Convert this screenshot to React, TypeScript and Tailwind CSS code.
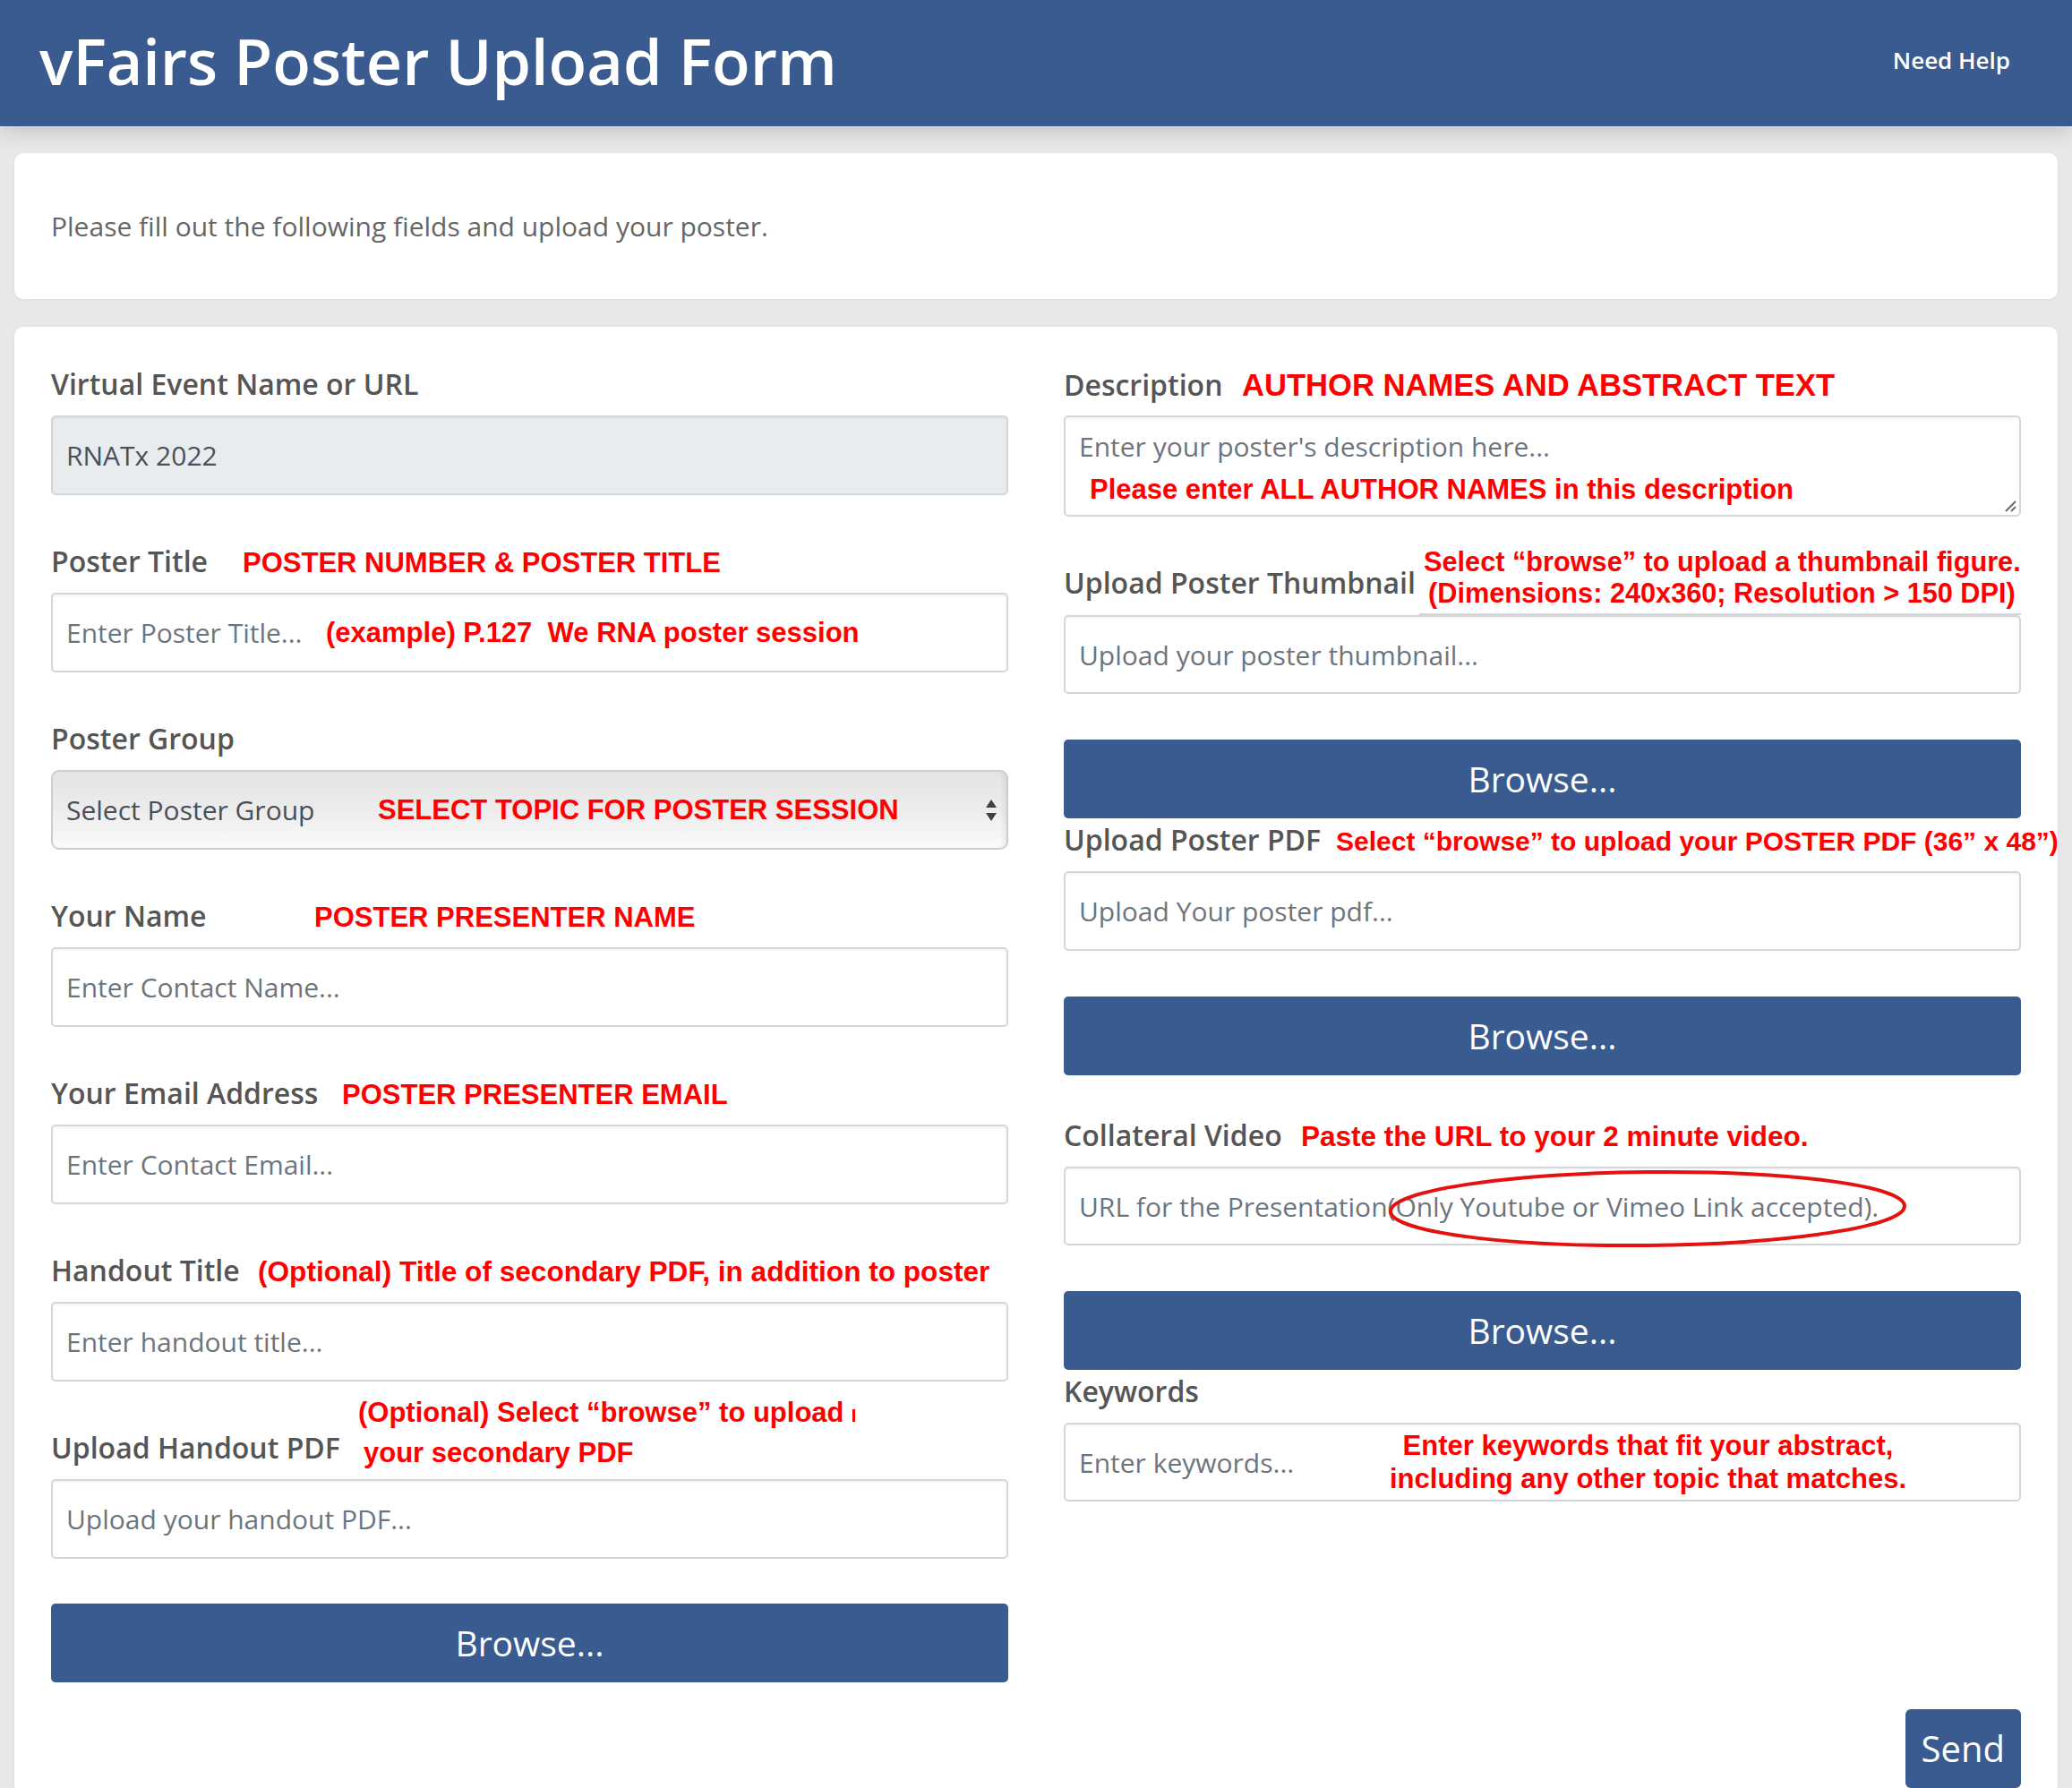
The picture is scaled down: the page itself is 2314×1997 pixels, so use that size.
import React from 'react'
import clsx from 'clsx'
import { twMerge } from 'tailwind-merge'

const note = "font-['Liberation_Sans',Arial,sans-serif] font-bold text-[31px] text-[#ff0000] whitespace-nowrap"
const red = (extra?: string) => twMerge(note, extra)

function Row({ w, label, children, end }: { w?: number; label: string; children?: React.ReactNode; end?: boolean }) {
  return (
    <div className={clsx('flex h-[48px] whitespace-nowrap', end ? 'items-end' : 'items-baseline')}>
      <label className="shrink-0 text-[32px] font-semibold leading-[48px] text-[#555]" style={w ? { width: w } : undefined}>
        {label}
      </label>
      {children}
    </div>
  )
}

function Box({ children, className }: { children?: React.ReactNode; className?: string }) {
  return (
    <div
      className={twMerge(
        'flex h-[89px] items-center rounded-[5px] border-2 border-[#d3d7dc] bg-white px-[15px] text-[30px] leading-[45px] text-[#6c757d] shadow-[inset_0_2px_2px_rgba(0,0,0,0.04)]',
        className
      )}
    >
      {children}
    </div>
  )
}

function Browse({ className }: { className?: string }) {
  return (
    <button className={twMerge('flex h-[88px] w-full items-center justify-center rounded-[5px] bg-[#3a5b8f] text-[39px] text-white', className)}>
      Browse...
    </button>
  )
}

export default function App() {
  return (
    <div className="h-[1997px] overflow-hidden bg-[#e8e8e8] font-['Open_Sans',sans-serif]">
      <header className="relative z-10 flex h-[141px] items-start justify-between bg-[#3a5b8f] pl-[44px] pr-[69px] shadow-[0_6px_22px_rgba(0,0,0,0.16)]">
        <h1 className="mt-[33px] text-[70px] font-semibold leading-none text-white">vFairs Poster Upload Form</h1>
        <a href="#" className="mt-[54px] text-[26px] font-semibold leading-none text-white">
          Need Help
        </a>
      </header>

      <main className="px-4 pt-[30px]">
        <section className="flex h-[163px] items-center rounded-[10px] bg-white px-[41px] shadow-[0_1px_4px_rgba(0,0,0,0.06)]">
          <p className="text-[30px] leading-[45px] text-[#666]">Please fill out the following fields and upload your poster.</p>
        </section>

        <section className="mt-[31px] grid h-[1700px] grid-cols-2 gap-x-[62px] rounded-[10px] bg-white px-[41px] pt-[40px] shadow-[0_1px_4px_rgba(0,0,0,0.06)]">
          {/* left column */}
          <div className="flex flex-col">
            <div className="flex flex-col gap-[50px]">
              <div>
                <Row label="Virtual Event Name or URL" />
                <Box className="mt-[11px] bg-[#e9ecef] text-[#495057]">RNATx 2022</Box>
              </div>

              <div>
                <Row w={214} label="Poster Title">
                  <span className={note}>POSTER NUMBER &amp; POSTER TITLE</span>
                </Row>
                <Box className="mt-[11px]">
                  <span className="w-[290px] shrink-0">Enter Poster Title...</span>
                  <span className={red('whitespace-pre')}>(example) P.127  We RNA poster session</span>
                </Box>
              </div>

              <div>
                <Row label="Poster Group" />
                <div className="mt-[11px] flex h-[89px] items-center rounded-[9px] border-2 border-[#c9ced4] bg-gradient-to-b from-[#e4e4e4] via-[#ececec] to-[#fbfbfb] pl-[15px] pr-[10px] text-[30px] leading-[45px] text-[#495057] shadow-[inset_-6px_0_6px_-4px_rgba(0,0,0,0.08)]">
                  <span className="w-[348px] shrink-0">Select Poster Group</span>
                  <span className={note}>SELECT TOPIC FOR POSTER SESSION</span>
                  <svg className="ml-auto" width="14" height="28" viewBox="0 0 14 28">
                    <path d="M7 2 L13 11 L1 11 Z" fill="#3d4146" />
                    <path d="M1 17 L13 17 L7 26 Z" fill="#3d4146" />
                  </svg>
                </div>
              </div>

              <div>
                <Row w={294} label="Your Name">
                  <span className={note}>POSTER PRESENTER NAME</span>
                </Row>
                <Box className="mt-[11px]">Enter Contact Name...</Box>
              </div>

              <div>
                <Row w={325} label="Your Email Address">
                  <span className={note}>POSTER PRESENTER EMAIL</span>
                </Row>
                <Box className="mt-[11px]">Enter Contact Email...</Box>
              </div>

              <div>
                <Row w={231} label="Handout Title">
                  <span className={red('text-[31.6px]')}>(Optional) Title of secondary PDF, in addition to poster</span>
                </Row>
                <Box className="mt-[11px]">Enter handout title...</Box>
              </div>

              <div>
                <Row w={343} label="Upload Handout PDF" end>
                  <div className={red('-mb-[4px] leading-[45px]')}>
                    <div className="flex items-center">
                      (Optional) Select “browse” to upload
                      {/* torn edge of the pasted note */}
                      <span aria-hidden className="ml-[9px] mt-[6px] h-[14px] w-[3px] bg-[#ff0000]" />
                    </div>
                    <div className="pl-[6px]">your secondary PDF</div>
                  </div>
                </Row>
                <Box className="mt-[11px]">Upload your handout PDF...</Box>
              </div>
            </div>

            <Browse className="mt-[50px]" />
          </div>

          {/* right column */}
          <div className="flex flex-col">
            <Row w={199} label="Description">
              <span className={red('text-[34.6px]')}>AUTHOR NAMES AND ABSTRACT TEXT</span>
            </Row>
            <div className="relative mt-[11px] h-[113px] rounded-[5px] border-2 border-[#d3d7dc] bg-white px-[15px] pt-[10px] shadow-[inset_0_2px_2px_rgba(0,0,0,0.04)]">
              <div className="text-[30px] leading-[45px] text-[#6c757d]">Enter your poster's description here...</div>
              <div className={red('mt-[3px] pl-[12px] leading-[45px]')}>Please enter ALL AUTHOR NAMES in this description</div>
              <svg className="absolute bottom-[3px] right-[3px]" width="14" height="14" viewBox="0 0 14 14">
                <path d="M2 13 L13 2 M8 13 L13 8" stroke="#6b6b6b" strokeWidth="2" />
              </svg>
            </div>

            <div className="mt-[50px]">
              <Row w={397} label="Upload Poster Thumbnail" end>
                <div className={red('relative z-10 -mb-[12px] w-[685px] border-b-2 border-[#d3d7dc] bg-white pb-[5px] pl-[5px] text-[30.7px] leading-[35px]')}>
                  <div>Select “browse” to upload a thumbnail figure.</div>
                  <div className="pl-[5px]">(Dimensions: 240x360; Resolution &gt; 150 DPI)</div>
                </div>
              </Row>
              <Box className="mt-[12px] h-[88px]">Upload your poster thumbnail...</Box>
            </div>

            <Browse className="mt-[51px]" />

            <Row w={304} label="Upload Poster PDF">
              <span className={red('text-[30px]')}>Select “browse” to upload your POSTER PDF (36” x 48”)</span>
            </Row>
            <Box className="mt-[11px]">Upload Your poster pdf...</Box>

            <Browse className="mt-[51px]" />

            <div className="mt-[43px]">
              <Row w={265} label="Collateral Video">
                <span className={red('text-[31.5px]')}>Paste the URL to your 2 minute video.</span>
              </Row>
              <div className="relative">
                <Box className="mt-[11px] h-[88px]">URL for the Presentation(Only Youtube or Vimeo Link accepted).</Box>
                <svg className="absolute left-[362px] top-[1px]" width="582" height="90" viewBox="0 0 582 90">
                  <ellipse cx="290" cy="46" rx="287" ry="41" fill="none" stroke="#e3120f" strokeWidth="4" transform="rotate(-0.6 290 46)" />
                </svg>
              </div>
            </div>

            <Browse className="mt-[51px]" />

            <Row label="Keywords" />
            <Box className="mt-[11px] h-[88px]">
              <span className="w-[347px] shrink-0">Enter keywords...</span>
              <div className={red('text-center leading-[37px]')}>
                <div>Enter keywords that fit your abstract,</div>
                <div>including any other topic that matches.</div>
              </div>
            </Box>

            <div className="mt-[232px] flex justify-end">
              <button className="h-[88px] rounded-[6px] bg-[#3a5b8f] px-[18px] text-[40px] text-white">Send</button>
            </div>
          </div>
        </section>
      </main>
    </div>
  )
}
